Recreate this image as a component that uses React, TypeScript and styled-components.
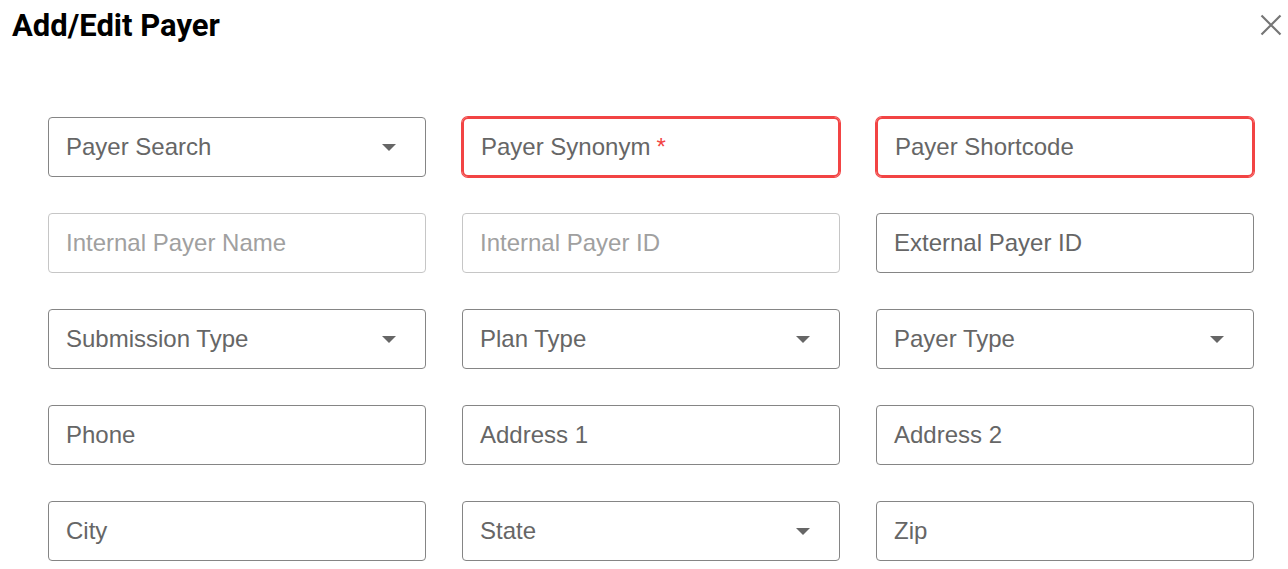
import styled, { createGlobalStyle } from 'styled-components';

const GlobalStyle = createGlobalStyle`
  html, body {
    margin: 0;
    padding: 0;
    background: #ffffff;
  }
  * {
    box-sizing: border-box;
  }
`;

const Dialog = styled.div`
  width: 1288px;
  height: 569px;
  background: #fff;
  overflow: hidden;
`;

const Header = styled.div`
  display: flex;
  justify-content: space-between;
  align-items: flex-start;
  padding: 8px 5px 0 12px;
  height: 117px;
`;

const Title = styled.h2`
  margin: 0;
  font-family: Roboto, "Liberation Sans", sans-serif;
  font-weight: 700;
  font-size: 31px;
  line-height: 36px;
  color: #000;
`;

const CloseButton = styled.button`
  border: none;
  background: none;
  padding: 0;
  margin-top: 5px;
  width: 24px;
  height: 24px;
  display: flex;
  align-items: center;
  justify-content: center;
  cursor: pointer;
`;

const Grid = styled.div`
  display: grid;
  grid-template-columns: repeat(3, 378px);
  grid-auto-rows: 60px;
  column-gap: 36px;
  row-gap: 36px;
  padding-left: 48px;
`;

const Field = styled.div<{ $error?: boolean; $disabled?: boolean }>`
  display: flex;
  align-items: center;
  justify-content: space-between;
  padding: 0 29px 0 ${p => (p.$error ? '17px' : '17px')};
  border: ${p => (p.$error ? '2px' : '1px')} solid
    ${p => (p.$error ? '#f24444' : p.$disabled ? '#c6c6c6' : '#858585')};
  border-radius: ${p => (p.$error ? '6px' : '4px')};
  box-shadow: ${p => (p.$error ? '0 0 0 1px #f24444' : 'none')};
  font-family: "Liberation Sans", Arial, sans-serif;
  font-size: 24px;
  color: ${p => (p.$disabled ? '#a0a0a0' : '#666666')};
`;

const Label = styled.span`
  white-space: nowrap;
`;

const Required = styled.span`
  color: #f24444;
  margin-left: 6px;
`;

const Arrow = styled.span`
  width: 0;
  height: 0;
  border-left: 7px solid transparent;
  border-right: 7px solid transparent;
  border-top: 7px solid #666;
`;

type FieldDef = {
  label: string;
  select?: boolean;
  error?: boolean;
  required?: boolean;
  disabled?: boolean;
};

const fields: FieldDef[] = [
  { label: 'Payer Search', select: true },
  { label: 'Payer Synonym', error: true, required: true },
  { label: 'Payer Shortcode', error: true },
  { label: 'Internal Payer Name', disabled: true },
  { label: 'Internal Payer ID', disabled: true },
  { label: 'External Payer ID' },
  { label: 'Submission Type', select: true },
  { label: 'Plan Type', select: true },
  { label: 'Payer Type', select: true },
  { label: 'Phone' },
  { label: 'Address 1' },
  { label: 'Address 2' },
  { label: 'City' },
  { label: 'State', select: true },
  { label: 'Zip' },
];

export default function App() {
  return (
    <Dialog>
      <GlobalStyle />
      <Header>
        <Title>Add/Edit Payer</Title>
        <CloseButton aria-label="close">
          <svg width="22" height="22" viewBox="0 0 22 22">
            <path d="M1.5 1.5 L20.5 20.5 M20.5 1.5 L1.5 20.5" stroke="#767676" strokeWidth="2.2" fill="none" />
          </svg>
        </CloseButton>
      </Header>
      <Grid>
        {fields.map(f => (
          <Field key={f.label} $error={f.error} $disabled={f.disabled}>
            <Label>
              {f.label}
              {f.required && <Required>*</Required>}
            </Label>
            {f.select && <Arrow />}
          </Field>
        ))}
      </Grid>
    </Dialog>
  );
}
